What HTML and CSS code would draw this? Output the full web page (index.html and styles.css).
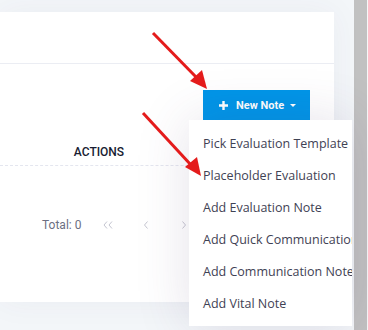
FILE: index.html
```html
<!DOCTYPE html>
<html>
<head>
<meta charset="utf-8">
<link rel="stylesheet" href="styles.css">
</head>
<body>
<div class="viewport">
  <div class="main">
    <div class="card">
      <div class="card-header"></div>
      <div class="card-body">
        <div class="toolbar">
          <button class="btn-new">
            <svg class="plus" width="9" height="9" viewBox="0 0 9 9"><path d="M4.5 0v9M0 4.5h9" stroke="#fff" stroke-width="2.4" fill="none"/></svg>
            <span>New Note</span>
            <svg class="caret" width="6" height="3" viewBox="0 0 6 3"><path d="M0 0h6L3 3z" fill="#fff"/></svg>
          </button>
        </div>
        <div class="thead">
          <div class="th-actions">ACTIONS</div>
        </div>
        <div class="pager">
          <span class="total">Total: 0</span>
          <span class="pg"><svg width="10" height="8" viewBox="0 0 10 8"><path d="M4 0.5L1 4l3 3.5M9 0.5L6 4l3 3.5" stroke="#c4c5d0" stroke-width="1" fill="none"/></svg></span>
          <span class="pg"><svg width="4" height="8" viewBox="0 0 4 8"><path d="M3.5 0.5L0.5 4l3 3.5" stroke="#c4c5d0" stroke-width="1" fill="none"/></svg></span>
          <span class="pg"><svg width="4" height="8" viewBox="0 0 4 8"><path d="M0.5 0.5L3.5 4l-3 3.5" stroke="#c4c5d0" stroke-width="1" fill="none"/></svg></span>
        </div>
      </div>
    </div>
    <div class="menu">
      <div class="item">Pick Evaluation Template</div>
      <div class="item">Placeholder Evaluation</div>
      <div class="item">Add Evaluation Note</div>
      <div class="item">Add Quick Communication Note</div>
      <div class="item">Add Communication Note</div>
      <div class="item">Add Vital Note</div>
    </div>
    <svg class="arrows" width="354" height="330" viewBox="0 0 354 330">
      <line x1="153" y1="33" x2="197" y2="78" stroke="#e41b1b" stroke-width="3"/>
      <polygon points="207,89 190,81 202,70" fill="#e41b1b"/>
      <line x1="143" y1="113" x2="191" y2="165" stroke="#e41b1b" stroke-width="3"/>
      <polygon points="201,176 185,167 197,157" fill="#e41b1b"/>
    </svg>
  </div>
  <div class="scrollbar"></div>
  <div class="edge"></div>
</div>
</body>
</html>
```
FILE: styles.css
```css
html, body { margin: 0; padding: 0; }
body { background: #f3f6f9; width: 368px; height: 330px; overflow: hidden; }
.viewport { display: flex; height: 330px; }
.main { position: relative; width: 354px; padding-top: 12px; box-sizing: border-box; }
.card {
  width: 334px; height: 290px; background: #fff;
  box-shadow: 0 0 30px rgba(82,63,105,0.05);
}
.card-header { height: 51px; border-bottom: 1px solid #ebedf3; }
.card-body { display: flex; flex-direction: column; }
.toolbar { display: flex; justify-content: flex-end; padding: 26px 24px 0 0; }
.btn-new {
  width: 107px; height: 30px; border: 0; background: #0095e8; color: #fff;
  display: flex; align-items: center; padding: 0 0 0 16px; box-sizing: border-box;
  font-family: Roboto, sans-serif; font-weight: 700; font-size: 11px;
}
.btn-new .plus { margin-right: 8px; }
.btn-new .caret { margin-left: 6px; }
.thead { height: 45px; border-bottom: 1px dashed #e4e6ef; display: flex; align-items: center; }
.th-actions {
  width: 198px; text-align: center; padding-top: 19px;
  font-family: Roboto, sans-serif; font-weight: 500; font-size: 12px; color: #181c32;
}
.pager {
  display: flex; align-items: center; height: 16px; padding: 51px 0 0 42px;
  font-family: Roboto, sans-serif; font-size: 12px;
}
.total { color: #6c6f82; width: 39px; margin-right: 8px; white-space: nowrap; }
.pg { width: 38px; display: flex; justify-content: center; align-items: center; }
.menu {
  position: absolute; left: 189px; top: 120px; width: 163px; height: 206px;
  background: #fff; box-sizing: border-box; padding: 8px 0 0 14px; overflow: hidden;
  box-shadow: 0 0 50px rgba(82,63,105,0.15);
}
.item {
  height: 32px; line-height: 32px; white-space: nowrap;
  font-family: "Open Sans", sans-serif; font-size: 12.5px; color: #3f4254;
}
.arrows { position: absolute; left: 0; top: 0; pointer-events: none; }
.scrollbar { width: 13px; background: #c1c1c1; }
.edge { width: 1px; background: #f8f8f8; }
```
